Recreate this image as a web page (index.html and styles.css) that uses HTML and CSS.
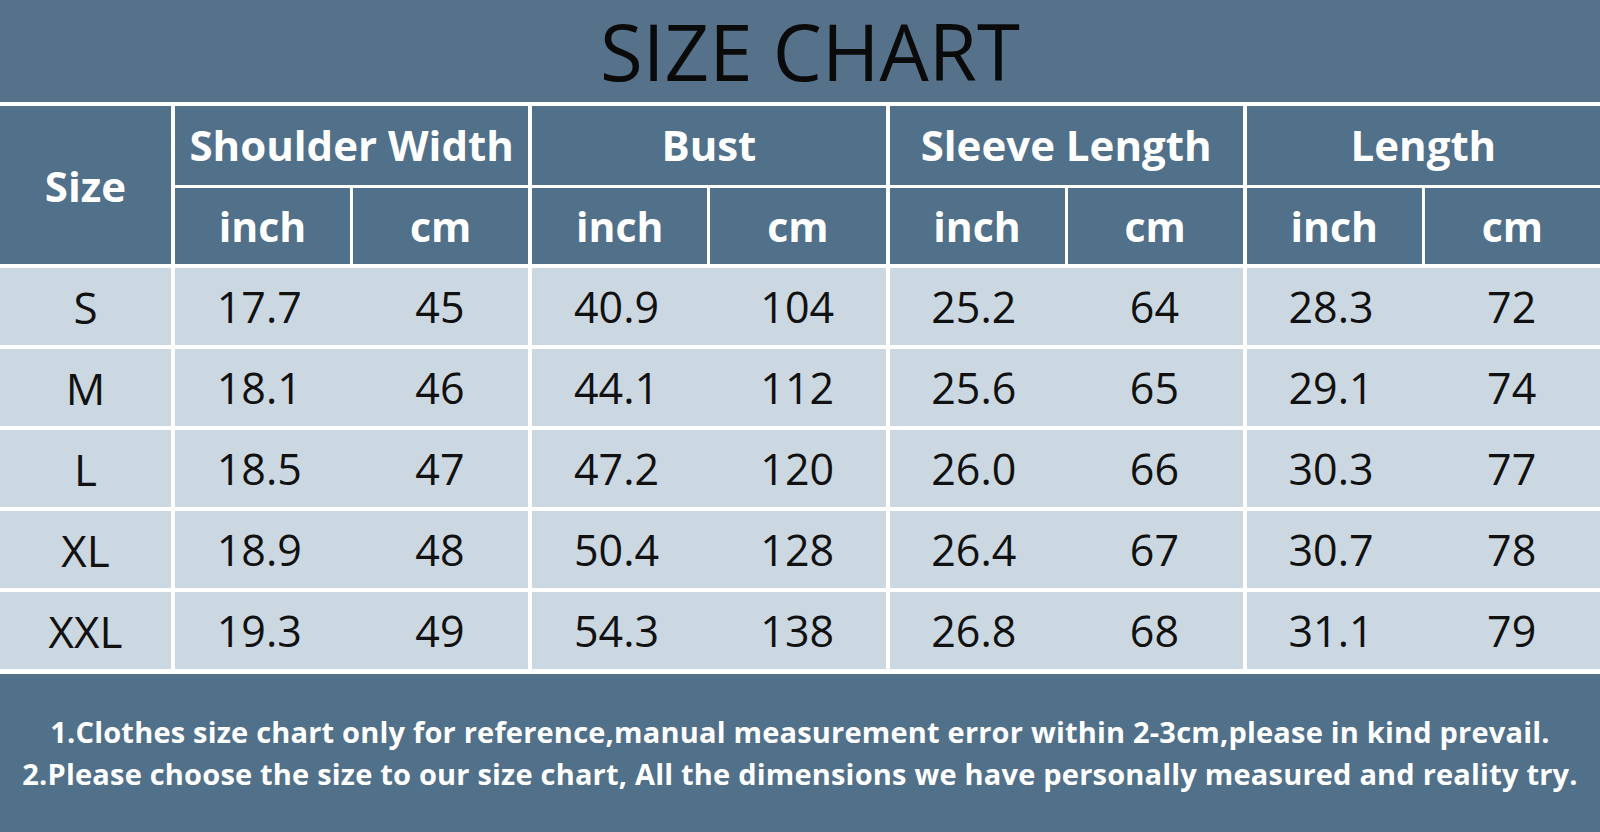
FILE: index.html
```html
<!DOCTYPE html>
<html lang="en">
<head>
<meta charset="utf-8">
<title>Size Chart</title>
<link rel="stylesheet" href="styles.css">
</head>
<body>
<div class="chart">
  <div class="title">SIZE CHART</div>
  <div class="table">
    <div class="cell head size-head">Size</div>
    <div class="cell head group-head">Shoulder Width</div>
    <div class="cell head group-head">Bust</div>
    <div class="cell head group-head">Sleeve Length</div>
    <div class="cell head group-head">Length</div>

    <div class="sub"><span class="cell head unit">inch</span><span class="cell head unit">cm</span></div>
    <div class="sub"><span class="cell head unit">inch</span><span class="cell head unit">cm</span></div>
    <div class="sub"><span class="cell head unit">inch</span><span class="cell head unit">cm</span></div>
    <div class="sub"><span class="cell head unit">inch</span><span class="cell head unit">cm</span></div>

    <div class="cell data">S</div>
    <div class="pair"><span>17.7</span><span>45</span></div>
    <div class="pair"><span>40.9</span><span>104</span></div>
    <div class="pair"><span>25.2</span><span>64</span></div>
    <div class="pair"><span>28.3</span><span>72</span></div>

    <div class="cell data">M</div>
    <div class="pair"><span>18.1</span><span>46</span></div>
    <div class="pair"><span>44.1</span><span>112</span></div>
    <div class="pair"><span>25.6</span><span>65</span></div>
    <div class="pair"><span>29.1</span><span>74</span></div>

    <div class="cell data">L</div>
    <div class="pair"><span>18.5</span><span>47</span></div>
    <div class="pair"><span>47.2</span><span>120</span></div>
    <div class="pair"><span>26.0</span><span>66</span></div>
    <div class="pair"><span>30.3</span><span>77</span></div>

    <div class="cell data">XL</div>
    <div class="pair"><span>18.9</span><span>48</span></div>
    <div class="pair"><span>50.4</span><span>128</span></div>
    <div class="pair"><span>26.4</span><span>67</span></div>
    <div class="pair"><span>30.7</span><span>78</span></div>

    <div class="cell data">XXL</div>
    <div class="pair"><span>19.3</span><span>49</span></div>
    <div class="pair"><span>54.3</span><span>138</span></div>
    <div class="pair"><span>26.8</span><span>68</span></div>
    <div class="pair"><span>31.1</span><span>79</span></div>
  </div>
  <div class="notes">
    <p>1.Clothes size chart only for reference,manual measurement error within 2-3cm,please in kind prevail.</p>
    <p>2.Please choose the size to our size chart, All the dimensions we have personally measured and reality try.</p>
  </div>
</div>
</body>
</html>
```
FILE: styles.css
```css
html, body {
  margin: 0;
  padding: 0;
  background: #ffffff;
}

.chart {
  width: 1600px;
  height: 832px;
  display: flex;
  flex-direction: column;
  background: #ffffff;
  font-family: "Open Sans", "Noto Sans", "DejaVu Sans", sans-serif;
}

.title {
  height: 102px;
  flex: 0 0 auto;
  padding-left: 20px;
  background: #56728b;
  color: #0a0a0a;
  font-size: 78px;
  line-height: 102px;
  text-align: center;
  font-weight: 400;
}

.table {
  margin-top: 4px;
  display: grid;
  grid-template-columns: 171px repeat(4, 1fr);
  grid-template-rows: 78px 76px repeat(5, 77px);
  column-gap: 4px;
  row-gap: 4px;
}

.cell {
  display: flex;
  align-items: center;
  justify-content: center;
}

.head {
  background: #51708a;
  color: #ffffff;
  font-weight: 700;
  font-size: 42px;
}

.size-head {
  grid-row: span 2;
}

.group-head {
  margin-bottom: -1px;
  padding-bottom: 2px;
}

.sub {
  display: grid;
  grid-template-columns: 1fr 1fr;
  column-gap: 3px;
}

.unit {
  font-size: 41px;
}

.data {
  background: #cbd8e2;
  color: #111111;
  font-size: 44px;
}

.pair {
  display: grid;
  grid-template-columns: 1fr 1fr;
  background: #cbd8e2;
  color: #111111;
  font-size: 43px;
}

.pair span {
  display: flex;
  align-items: center;
  justify-content: center;
}

.pair span:first-child {
  padding-right: 8px;
}

.notes {
  margin-top: 5px;
  flex: 1 1 auto;
  background: #51708a;
  color: #ffffff;
  font-weight: 700;
  font-size: 29px;
  letter-spacing: 0.2px;
  display: flex;
  flex-direction: column;
  justify-content: center;
  align-items: center;
}

.notes p {
  margin: 0;
  line-height: 42px;
  white-space: nowrap;
}
```
